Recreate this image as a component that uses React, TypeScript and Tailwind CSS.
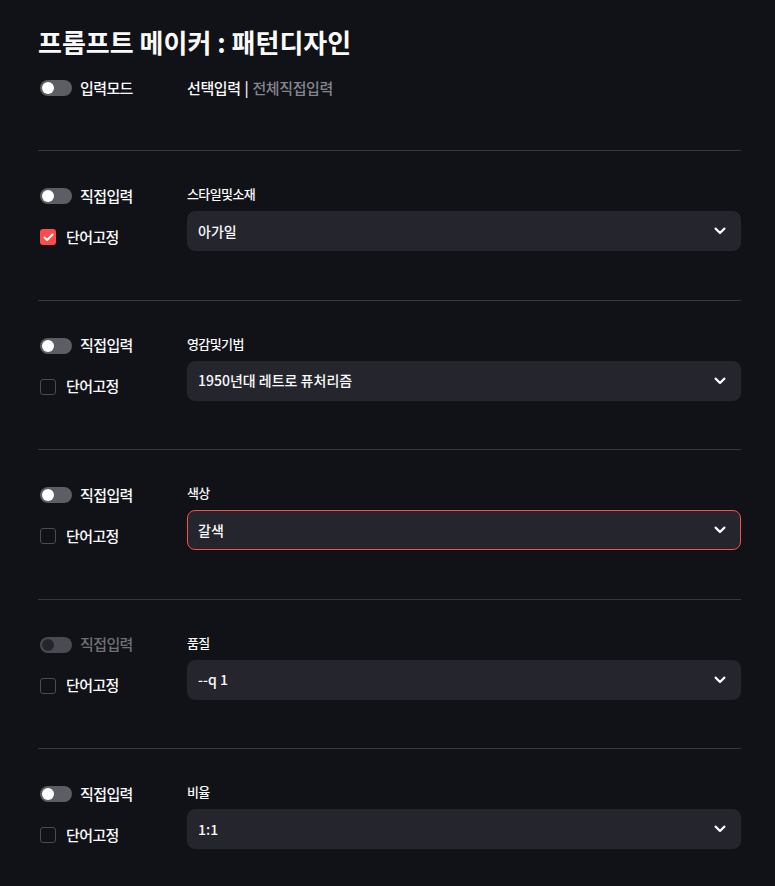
import React from "react";

const font = { fontFamily: '"Noto Sans CJK KR", "Noto Sans", sans-serif' };

function Toggle({ disabled = false }: { disabled?: boolean }) {
  return (
    <div
      className={`relative ml-[2px] h-4 w-8 shrink-0 rounded-full ${
        disabled ? "bg-[#4a4b52]" : "bg-[#5d5e65]"
      }`}
    >
      <div
        className={`absolute left-[2px] top-[2px] h-3 w-3 rounded-full ${
          disabled ? "bg-[#25262c]" : "bg-white"
        }`}
      />
    </div>
  );
}

function Checkbox({ checked = false }: { checked?: boolean }) {
  return checked ? (
    <div className="ml-[2px] flex h-4 w-4 shrink-0 items-center justify-center rounded-[3px] bg-[#ff4b4b]">
      <svg width="11" height="9" viewBox="0 0 11 9" fill="none">
        <path d="M1.5 4.5 L4.2 7 L9.5 1.5" stroke="white" strokeWidth="2" strokeLinecap="round" strokeLinejoin="round" />
      </svg>
    </div>
  ) : (
    <div className="ml-[2px] h-4 w-4 shrink-0 rounded-[3px] border border-[#4b4c53] bg-[#111217]" />
  );
}

function Chevron() {
  return (
    <svg width="12" height="8" viewBox="0 0 12 8" fill="none">
      <path d="M1.6 1.6 L6 6 L10.4 1.6" stroke="#fafafa" strokeWidth="2.2" strokeLinecap="round" strokeLinejoin="round" />
    </svg>
  );
}

type Sec = { label: string; value: string; checked?: boolean; focused?: boolean; disabled?: boolean };

const sections: Sec[] = [
  { label: "스타일및소재", value: "아가일", checked: true },
  { label: "영감및기법", value: "1950년대 레트로 퓨처리즘" },
  { label: "색상", value: "갈색", focused: true },
  { label: "품질", value: "--q 1", disabled: true },
  { label: "비율", value: "1:1" },
];

function Section({ s }: { s: Sec }) {
  return (
    <div>
      <div className="h-px bg-[#36373c]" />
      <div className="grid grid-cols-[133px_1fr] gap-4 pt-[33px] pb-[48.5px]">
        <div className="flex flex-col gap-[17px]">
          <div className="flex h-6 items-center gap-2">
            <Toggle disabled={s.disabled} />
            <span
              className={`text-[15px] font-medium tracking-[-0.6px] ${
                s.disabled ? "text-[#6f7076]" : "text-[#fafafa]"
              }`}
            >
              직접입력
            </span>
          </div>
          <div className="flex h-6 items-center gap-[10px]">
            <Checkbox checked={s.checked} />
            <span className="text-[15px] font-medium tracking-[-0.6px] text-[#fafafa]">단어고정</span>
          </div>
        </div>
        <div className="flex flex-col">
          <div className="h-5 text-[13px] font-medium leading-5 tracking-[-0.6px] text-[#fafafa]">{s.label}</div>
          <div
            className={`mt-[7px] flex h-10 items-center justify-between rounded-lg border bg-[#25262d] pl-[10px] pr-[14px] ${
              s.focused ? "border-[#ff4b4b]" : "border-[#25262d]"
            }`}
          >
            <span className="text-[14px] font-medium text-[#fafafa]">{s.value}</span>
            <Chevron />
          </div>
        </div>
      </div>
    </div>
  );
}

export default function App() {
  return (
    <div className="min-h-[886px] w-full bg-[#111217] pl-[38px] pr-[34px]" style={font}>
      <div className="pt-[24px]">
        <h1 className="h-9 text-[26px] font-bold leading-9 text-[#fafafa]">프롬프트 메이커 : 패턴디자인</h1>
      </div>
      <div className="mt-4 grid h-6 grid-cols-[133px_1fr] items-center gap-4">
        <div className="flex items-center gap-2">
          <Toggle />
          <span className="text-[15px] font-medium tracking-[-0.6px] text-[#fafafa]">입력모드</span>
        </div>
        <div className="text-[15px] font-medium tracking-[-0.4px] text-[#fafafa]">
          선택입력<span className="mx-[4px]">|</span>
          <span className="text-[#84868f]">전체직접입력</span>
        </div>
      </div>
      <div className="mt-[50px]">
        {sections.map((s) => (
          <Section key={s.label} s={s} />
        ))}
      </div>
    </div>
  );
}
